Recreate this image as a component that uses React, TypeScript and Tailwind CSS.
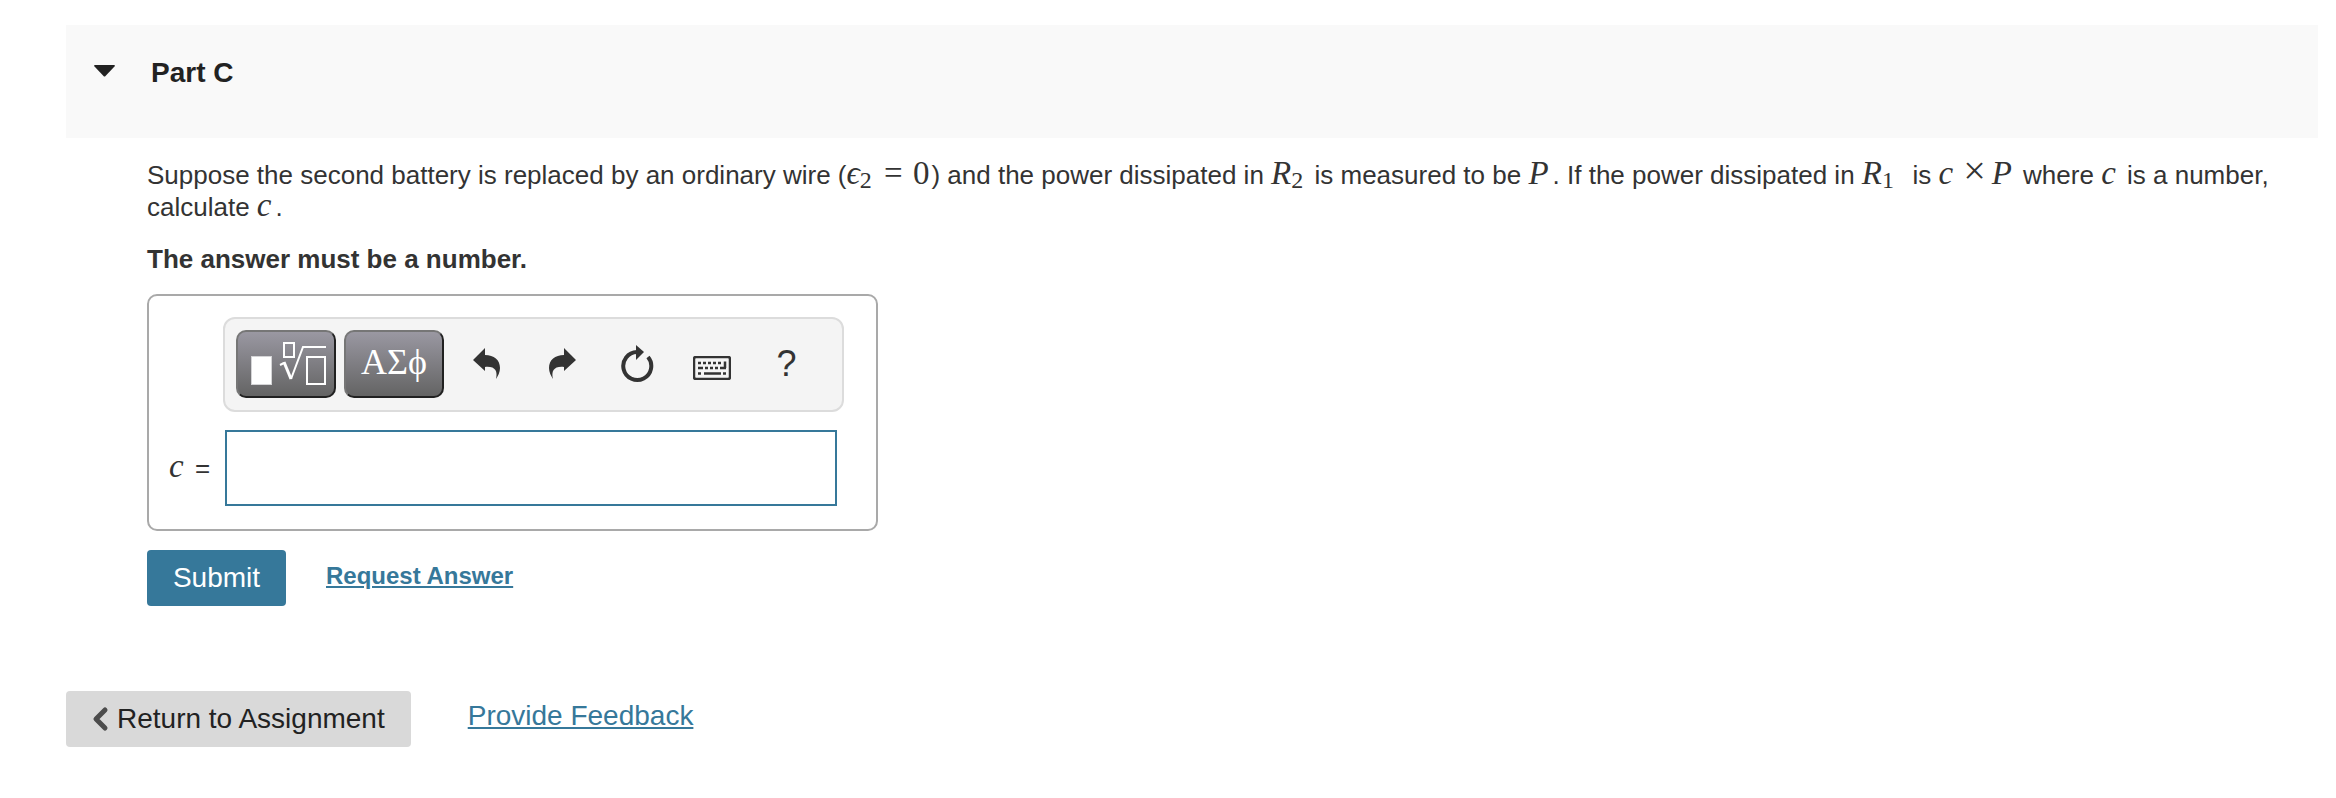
import { useState } from "react";
import type { ReactNode } from "react";

function MathVar({ children, sub }: { children: ReactNode; sub?: string }) {
  return (
    <span className="pr-1 font-['Liberation_Serif',serif] text-[33px] leading-5">
      <i>{children}</i>
      {sub && <span className="relative top-1 text-[24px] leading-5">{sub}</span>}
    </span>
  );
}

function ToolButton({
  label,
  onClick,
  children,
}: {
  label: string;
  onClick?: () => void;
  children: ReactNode;
}) {
  return (
    <button
      type="button"
      aria-label={label}
      title={label}
      onClick={onClick}
      className="flex h-[68px] w-[75px] items-center justify-center text-[#333]"
    >
      {children}
    </button>
  );
}

function PaletteButton({ label, children }: { label: string; children: ReactNode }) {
  return (
    <button
      type="button"
      aria-label={label}
      className="flex h-[68px] w-[100px] items-center justify-center rounded-[10px] border-2 border-t-[#767676] border-r-[#212121] border-b-[#212121] border-l-[#767676] bg-linear-to-b from-[#9a98a2] to-[#646464] text-white"
    >
      {children}
    </button>
  );
}

function TemplatesIcon() {
  return (
    <svg width="96" height="64" viewBox="2 2 96 64" fill="none" stroke="white" strokeWidth="2">
      <rect x="15.5" y="26.5" width="20" height="28" fill="white" stroke="#d4d4d6" strokeWidth="1" />
      <rect x="48" y="13" width="10" height="14" />
      <path d="M44 35l4-2" />
      <path d="M48 32l7 17" strokeWidth="3" />
      <path d="M55 49l12-32h23" />
      <rect x="71" y="27" width="18" height="27" />
    </svg>
  );
}

function UndoIcon({ flipped }: { flipped?: boolean }) {
  return (
    <svg width="28" height="32" viewBox="0 0 28 32" fill="currentColor" className={flipped ? "-scale-x-100" : ""}>
      <path d="M0 12L12 0v7c9 0 15 5 15 13 0 4-2 8-4 11 2-8-1-13-11-12v4z" />
    </svg>
  );
}

function ResetIcon() {
  return (
    <svg width="34" height="38" viewBox="0 0 34 38" fill="none">
      <path d="M17 7A14 14 0 1 0 28 12" stroke="currentColor" strokeWidth="4" />
      <path d="M16 0l8 7-8 8z" fill="currentColor" />
    </svg>
  );
}

function KeyboardIcon() {
  return (
    <svg width="38" height="24" viewBox="0 0 38 24" fill="none" stroke="currentColor">
      <rect x="1" y="1" width="36" height="22" rx="2" strokeWidth="2.500" />
      <path d="M5 7h3M10 7h3M15 7h3M20 7h3M25 7h3" strokeWidth="2.500" />
      <path d="M5 12h5M12 12h3M17 12h3M22 12h3M27 12h6M32 5.500v6.500" strokeWidth="2.500" />
      <path d="M5 17.500h3M11 17.500h17M30 17.500h3" strokeWidth="2.500" />
    </svg>
  );
}

export default function App() {
  const [open, setOpen] = useState(true);
  const [answer, setAnswer] = useState("");

  return (
    <main className="min-h-screen bg-white pt-[25px] pr-[18px] pb-12 pl-[66px] font-['Liberation_Sans',Arial,sans-serif] text-[26px] leading-8 text-[#333]">
      <header className="flex h-[113px] items-start bg-[#f9f9f9] pt-8 pl-7">
        <button
          type="button"
          aria-expanded={open}
          onClick={() => setOpen(!open)}
          className="flex items-center gap-9 text-[28px] leading-8 font-bold text-[#222]"
        >
          <svg width="21" height="12" viewBox="0 0 21 12" fill="currentColor" className="-mt-1">
            <path d="M1 0h19q1.500 0 .5 1.500L11.500 11q-1 1-2 0L.5 1.500Q-.5 0 1 0z" />
          </svg>
          <h2>Part C</h2>
        </button>
      </header>

      {open && (
        <section className="pt-[21px] pl-[81px]">
          <p>
            Suppose the second battery is replaced by an ordinary wire (<MathVar sub="2">ϵ</MathVar>
            <span className="font-['Liberation_Serif',serif] text-[33px] leading-5"> = </span>
            <span className="px-0.5 font-['Liberation_Serif',serif] text-[33px] leading-5">0</span>) and the power
            dissipated in <MathVar sub="2">R</MathVar> is measured to be <MathVar>P</MathVar>. If the power
            dissipated in <MathVar sub="1">R</MathVar>&nbsp; is <MathVar>c</MathVar>
            <span className="px-1.5 font-['Liberation_Serif',serif] text-[40px] leading-3">×</span>
            <MathVar>P</MathVar> where <MathVar>c</MathVar> is a number, calculate <MathVar>c</MathVar>.
          </p>
          <p className="mt-5 font-bold">The answer must be a number.</p>

          <form onSubmit={(e) => e.preventDefault()}>
            <div className="mt-[19px] w-[731px] max-w-full rounded-[10px] border-2 border-[#a9a9a9] pt-[21px] pr-8 pb-[23px]">
              <div role="toolbar" aria-label="Equation tools" className="ml-[74px] flex h-[95px] items-start rounded-xl border-2 border-[#dcdcdc] bg-[#f4f4f4] pt-[11px] pl-[11px]">
                <div className="mr-[5px] flex gap-2">
                  <PaletteButton label="Templates">
                    <TemplatesIcon />
                  </PaletteButton>
                  <PaletteButton label="Symbols">
                    <span className="pb-1 font-['Liberation_Serif',serif] text-[36px] leading-none">ΑΣϕ</span>
                  </PaletteButton>
                </div>
                <ToolButton label="Undo">
                  <UndoIcon />
                </ToolButton>
                <ToolButton label="Redo">
                  <UndoIcon flipped />
                </ToolButton>
                <ToolButton label="Reset" onClick={() => setAnswer("")}>
                  <ResetIcon />
                </ToolButton>
                <ToolButton label="Keyboard shortcuts">
                  <span className="pt-2">
                    <KeyboardIcon />
                  </span>
                </ToolButton>
                <ToolButton label="Help">
                  <span className="text-[36px] leading-none">?</span>
                </ToolButton>
              </div>

              <div className="mt-[18px] flex items-center pr-[7px]">
                <label htmlFor="answer" className="w-[76px] pl-5 whitespace-nowrap">
                  <MathVar>c</MathVar> =
                </label>
                <input
                  id="answer"
                  type="text"
                  value={answer}
                  onChange={(e) => setAnswer(e.target.value)}
                  className="h-[76px] min-w-0 flex-1 border-2 border-[#36789a] bg-white px-3 outline-none"
                />
              </div>
            </div>

            <div className="mt-[19px] flex items-center gap-10">
              <button type="submit" className="h-14 w-[139px] rounded-[4px] bg-[#36789a] text-[28px] text-white">
                Submit
              </button>
              <a href="#request" className="pb-1 text-[24px] font-bold text-[#36789a] underline decoration-2 underline-offset-2">
                Request Answer
              </a>
            </div>
          </form>
        </section>
      )}

      <footer className="mt-[85px] flex items-center gap-[57px] text-[28px]">
        <button type="button" className="flex h-14 items-center gap-2 rounded-[4px] bg-[#d9d9d9] px-[26px] text-[#222]">
          <svg width="17" height="26" viewBox="0 0 17 26" fill="none" stroke="#4c4c4c" strokeWidth="5" strokeLinecap="round" strokeLinejoin="round">
            <path d="M13 4L4 13l9 9" />
          </svg>
          Return to Assignment
        </button>
        <a href="#feedback" className="pb-1.5 text-[#36789a] underline decoration-2 underline-offset-2">
          Provide Feedback
        </a>
      </footer>
    </main>
  );
}
